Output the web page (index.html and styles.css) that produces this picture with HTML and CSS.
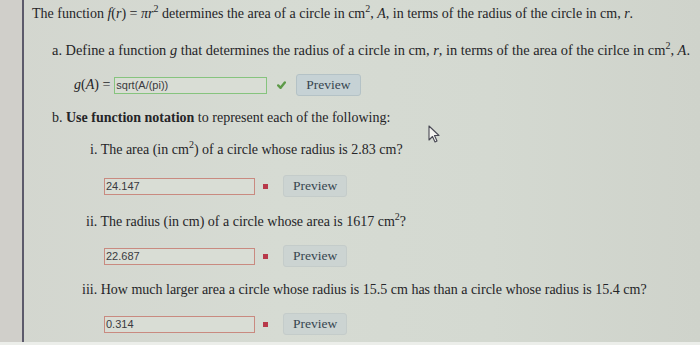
FILE: index.html
```html
<!DOCTYPE html>
<html>
<head>
<meta charset="utf-8">
<link rel="stylesheet" href="styles.css">
</head>
<body>
<div class="screen">
  <div class="bezel"></div>
  <div class="content">
    <p class="line l1">The function <i>f</i>(<i>r</i>) = <i>πr</i><sup>2</sup> determines the area of a circle in cm<sup>2</sup>, <i>A</i>, in terms of the radius of the circle in cm, <i>r</i>.</p>
    <p class="line la">a. Define a function <i>g</i> that determines the radius of a circle in cm, <i>r</i>, in terms of the area of the cirlce in cm<sup>2</sup>, <i>A</i>.</p>
    <div class="row rg">
      <span class="label"><i>g</i>(<i>A</i>) = </span>
      <span class="field ok">sqrt(A/(pi))</span>
      <svg class="check" width="9" height="8" viewBox="0 0 9 8"><path d="M1.2 4.4 L3.6 6.8 L7.8 1.4" fill="none" stroke="#5d9a48" stroke-width="2.4" stroke-linecap="round" stroke-linejoin="round"/></svg>
      <span class="btn">Preview</span>
    </div>
    <p class="line lb">b. <b>Use function notation</b> to represent each of the following:</p>
    <p class="line li">i. The area (in cm<sup>2</sup>) of a circle whose radius is 2.83 cm?</p>
    <div class="row ri">
      <span class="field bad">24.147</span>
      <span class="xmark"></span>
      <span class="btn plain">Preview</span>
    </div>
    <p class="line lii">ii. The radius (in cm) of a circle whose area is 1617 cm<sup>2</sup>?</p>
    <div class="row rii">
      <span class="field bad">22.687</span>
      <span class="xmark"></span>
      <span class="btn plain">Preview</span>
    </div>
    <p class="line liii">iii. How much larger area a circle whose radius is 15.5 cm has than a circle whose radius is 15.4 cm?</p>
    <div class="row riii">
      <span class="field bad">0.314</span>
      <span class="xmark"></span>
      <span class="btn plain">Preview</span>
    </div>
  </div>
</div>
<svg class="cursor" width="14" height="20" viewBox="0 0 14 20"><path d="M1 1 L1 15 L4.5 11.5 L7 17 L9 16 L6.5 10.5 L11 10.5 Z" fill="#f4f4f0" stroke="#4a4a55" stroke-width="1.1" stroke-linejoin="round"/></svg>
</body>
</html>
```
FILE: styles.css
```css
html, body {
  margin: 0;
  padding: 0;
}
body {
  width: 700px;
  height: 345px;
  overflow: hidden;
  position: relative;
  background: linear-gradient(90deg, #d3d6cf 0%, #d6dbd3 40%, #d4d9d1 70%, #cfd3cb 100%);
  font-family: "Liberation Serif", "Times New Roman", serif;
  color: #252528;
}
.screen {
  display: flex;
  height: 342px;
  border-bottom: 3px solid #eceeea;
}
.bezel {
  width: 22px;
  background: #d0cfca;
  border-right: 2px solid #5c5a6b;
}
.content {
  flex: 1;
  padding: 4px 0 0 8px;
  font-size: 14px;
}
.line {
  margin: 0;
  line-height: 20px;
  white-space: nowrap;
}
.la {
  font-size: 14.4px;
}
sup {
  font-size: 10px;
  line-height: 0;
  vertical-align: 6px;
}
i {
  font-style: italic;
}
.la { margin-top: 16px; padding-left: 20px; }
.rg { margin-top: 14px; padding-left: 42px; }
.lb { margin-top: 12px; padding-left: 20px; }
.li { margin-top: 12px; padding-left: 58px; }
.ri { margin-top: 15px; padding-left: 72px; }
.lii { margin-top: 15px; padding-left: 54px; }
.rii { margin-top: 13px; padding-left: 72px; }
.liii { margin-top: 13px; padding-left: 50px; }
.riii { margin-top: 13px; padding-left: 72px; }
.row {
  display: flex;
  align-items: center;
  height: 22px;
}
.label {
  font-size: 14px;
  margin-right: 4px;
}
.field {
  box-sizing: border-box;
  width: 151px;
  height: 17px;
  line-height: 15px;
  padding-left: 1px;
  font-family: "Liberation Sans", Arial, sans-serif;
  font-size: 11px;
  color: #3a3a40;
  background: #d9ddd5;
}
.field.ok {
  width: 153px;
  border: 1px solid #86c47e;
}
.field.bad {
  border: 1px solid #c98a80;
}
.check {
  margin-left: 10px;
}
.xmark {
  width: 5px;
  height: 5px;
  background: #b8394a;
  margin-left: 8px;
}
.btn {
  box-sizing: border-box;
  height: 22px;
  line-height: 20px;
  padding: 0 9px;
  margin-left: 10px;
  font-size: 13.5px;
  color: #374650;
  background: #c6d2d5;
  border: 1px solid #b4c2c6;
  border-radius: 3px;
}
.btn.plain {
  margin-left: 15px;
  background: #ccd4d2;
  border-color: #c4ccca;
}
.cursor {
  position: absolute;
  left: 428px;
  top: 125px;
}
```
